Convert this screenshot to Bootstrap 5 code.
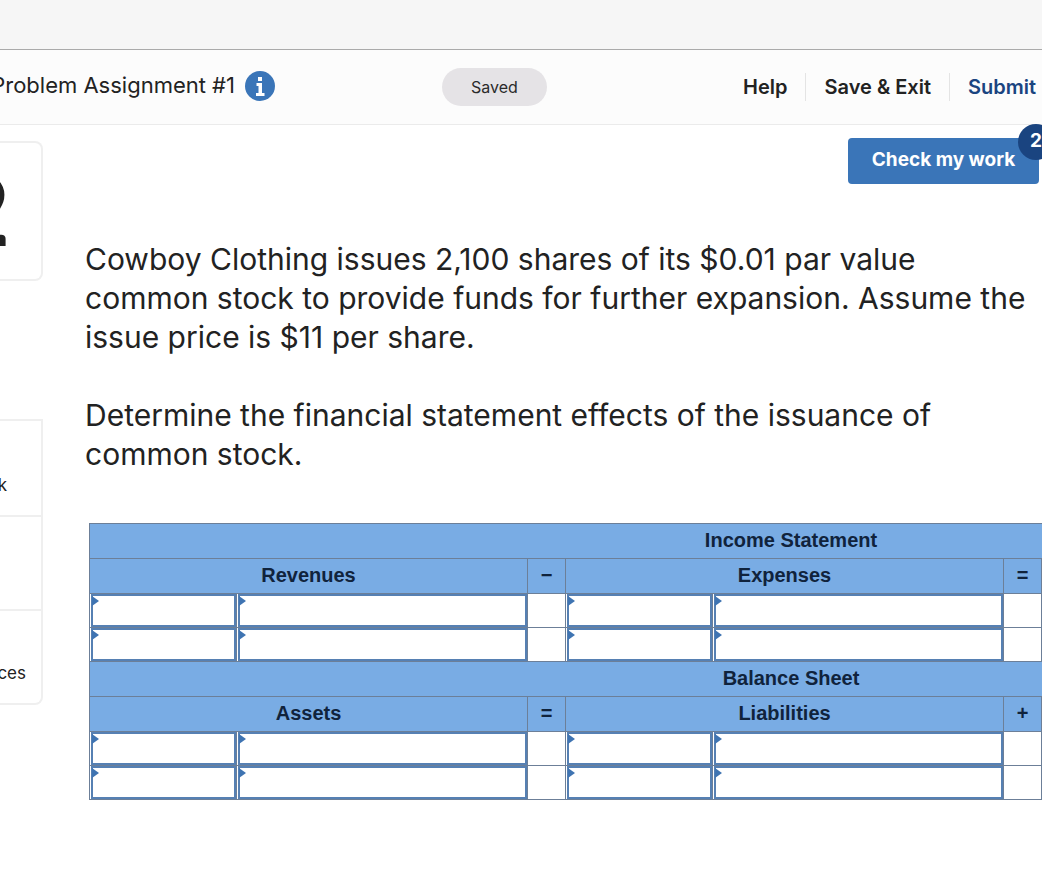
<!DOCTYPE html>
<html lang="en">
<head>
<meta charset="utf-8">
<meta name="viewport" content="width=device-width, initial-scale=1">
<title>Problem Assignment #1</title>
<link rel="stylesheet" href="https://cdn.jsdelivr.net/npm/bootstrap@5.3.0/dist/css/bootstrap.min.css">
<style>
body { font-family: Inter, "Liberation Sans", sans-serif; color: #222; background: #fff; overflow: hidden; }
.top-strip { height: 50px; background: #f6f6f6; border-bottom: 1px solid #aaa; }
.app-header { height: 75px; background: #fcfcfc; border-bottom: 1px solid #ebebeb; }
.crumb { width: 275px; margin-right: 167px; padding-bottom: 3px; gap: 10px; font-size: 22px; overflow: hidden; }
.saved-pill { width: 105px; height: 38px; background: #e5e3e6; color: #2b2b2b; font-size: 16px; }
.menu-links { padding-right: 6px; }
.menu-links a { font-size: 20px; line-height: 28px; font-weight: 600; color: #222; }
.menu-links a.go { color: #1a4480; }
.menu-links li + li { border-left: 1px solid #e4e4e4; margin-left: 18px; padding-left: 18px; }
.side { width: 43px; padding-top: 16px; }
.side-box { border: 2px solid #efefef; border-left: 0; border-radius: 0 8px 8px 0; overflow: hidden; }
.question-box { height: 140px; margin-bottom: 138px; padding-right: 31px; font-family: Lato, sans-serif; font-size: 98px; line-height: 130px; font-weight: 700; }
.tool-box { border-top-right-radius: 0; font-size: 17px; line-height: 24px; }
.tool-box > div { height: 94px; padding: 0 15px 18px 0; }
.tool-box > div:first-child { padding-right: 34px; }
.tool-box > div + div { border-top: 2px solid #efefef; }
.content-area { min-width: 0; padding: 13px 0 0 42px; }
.check-wrap { padding-right: 3px; margin-bottom: 56px; }
.check-btn { width: 191px; height: 46px; background: #3a75b8; color: #fff; border-radius: 4px; font-size: 19px; line-height: 28px; font-weight: 700; padding: 0 0 2px; border: 0; }
.count-dot { position: absolute; top: -14px; right: -15px; width: 36px; height: 36px; border-radius: 50%; background: #1a4480; line-height: 34px; }
.prompt p { font-size: 30px; line-height: 39px; margin-bottom: 39px; }
.sheet-wrap { overflow: hidden; margin: 49px 0 0 4px; }
.sheet { width: 1404px; table-layout: fixed; border-collapse: collapse; font-family: "Liberation Sans", sans-serif; font-size: 20px; color: #10233c; }
.sheet th, .sheet td { border: 1px solid #6c7f98; padding: 0; }
.sheet th { height: 35px; background: #79ace4; text-align: center; line-height: 30px; padding-bottom: 2px; }
.sheet td { height: 34px; position: relative; background: #fff; }
.sheet td.entry { padding: 0 0 0 1px; }
.sheet input { display: block; width: 100%; height: 33px; border: 2px solid #5680b3; border-radius: 0; padding: 0 10px; background: #fff; }
.entry::after { content: ""; position: absolute; left: 2px; top: 2px; border: solid transparent; border-width: 5px 0 5px 7px; border-left-color: #3f74b2; }
</style>
</head>
<body>
<div class="top-strip"></div>
<header class="app-header d-flex align-items-center">
  <div class="crumb d-flex align-items-center justify-content-end text-nowrap flex-shrink-0">
    <span>Problem Assignment #1</span>
    <svg class="flex-shrink-0" width="30" height="30" viewBox="0 0 30 30" aria-label="Information" role="img"><circle cx="15" cy="15" r="15" fill="#3a75b8"/><path fill="#fff" d="M13 6h4v4h-4zM11.500 12H17v10h2.500v3h-8.500v-3h2.500v-7h-2z"/></svg>
  </div>
  <span class="saved-pill rounded-pill d-flex align-items-center justify-content-center flex-shrink-0">Saved</span>
  <ul class="menu-links list-unstyled d-flex mb-0 ms-auto text-nowrap">
    <li><a href="#" class="text-decoration-none">Help</a></li>
    <li><a href="#" class="text-decoration-none">Save &amp; Exit</a></li>
    <li><a href="#" class="go text-decoration-none">Submit</a></li>
  </ul>
</header>
<div class="d-flex">
  <aside class="side flex-shrink-0">
    <div class="side-box question-box d-flex justify-content-end">2</div>
    <nav class="side-box tool-box">
      <div class="d-flex align-items-end justify-content-end">k</div>
      <div></div>
      <div class="d-flex align-items-end justify-content-end">ces</div>
    </nav>
  </aside>
  <main class="content-area flex-grow-1">
    <div class="check-wrap d-flex justify-content-end">
      <button type="button" class="check-btn btn position-relative">Check my work<span class="count-dot">2</span></button>
    </div>
    <div class="prompt">
      <p>Cowboy Clothing issues 2,100 shares of its $0.01 par value<br>common stock to provide funds for further expansion. Assume the<br>issue price is $11 per share.</p>
      <p class="mb-0">Determine the financial statement effects of the issuance of<br>common stock.</p>
    </div>
    <div class="sheet-wrap">
      <table class="sheet">
        <colgroup><col style="width:147px"><col style="width:291px"><col style="width:38px"><col style="width:147px"><col style="width:291px"><col style="width:38px"><col></colgroup>
        <tbody>
        <tr><th colspan="7">Income Statement</th></tr>
        <tr><th colspan="2">Revenues</th><th>−</th><th colspan="2">Expenses</th><th>=</th><th></th></tr>
        <tr><td class="entry"><input aria-label="Revenue account 1"></td><td class="entry"><input aria-label="Revenue amount 1"></td><td></td><td class="entry"><input aria-label="Expense account 1"></td><td class="entry"><input aria-label="Expense amount 1"></td><td></td><td></td></tr>
        <tr><td class="entry"><input aria-label="Revenue account 2"></td><td class="entry"><input aria-label="Revenue amount 2"></td><td></td><td class="entry"><input aria-label="Expense account 2"></td><td class="entry"><input aria-label="Expense amount 2"></td><td></td><td></td></tr>
        <tr><th colspan="7">Balance Sheet</th></tr>
        <tr><th colspan="2">Assets</th><th>=</th><th colspan="2">Liabilities</th><th>+</th><th></th></tr>
        <tr><td class="entry"><input aria-label="Asset account 1"></td><td class="entry"><input aria-label="Asset amount 1"></td><td></td><td class="entry"><input aria-label="Liability account 1"></td><td class="entry"><input aria-label="Liability amount 1"></td><td></td><td></td></tr>
        <tr><td class="entry"><input aria-label="Asset account 2"></td><td class="entry"><input aria-label="Asset amount 2"></td><td></td><td class="entry"><input aria-label="Liability account 2"></td><td class="entry"><input aria-label="Liability amount 2"></td><td></td><td></td></tr>
        </tbody>
      </table>
    </div>
  </main>
</div>
<script src="https://cdn.jsdelivr.net/npm/bootstrap@5.3.0/dist/js/bootstrap.bundle.min.js"></script>
</body>
</html>
